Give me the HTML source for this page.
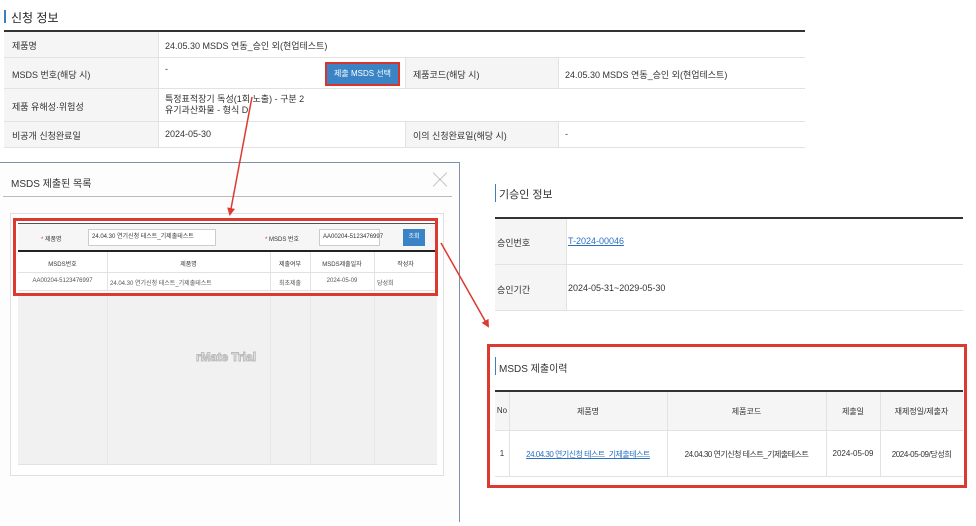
<!DOCTYPE html>
<html><head><meta charset="utf-8"><style>
*{margin:0;padding:0;box-sizing:border-box}
body{width:976px;height:526px;background:#fff;position:relative;overflow:hidden;font-family:"Liberation Sans","Noto Sans CJK KR",sans-serif;color:#333}
.a{position:absolute;white-space:nowrap}
.f9{font-size:9px}.f8{font-size:8px}.f6{font-size:6px}
.hl{position:absolute;height:1px;background:#e2e2e2}
.vl{position:absolute;width:1px;background:#e2e2e2}
.lab{position:absolute;background:#f5f5f5}
</style></head><body>

<!-- top section -->
<div class="a" style="left:4px;top:10px;width:2px;height:13px;background:#3c7fbf"></div>
<div class="a" style="left:11px;top:9px;font-size:12px;color:#222">신청 정보</div>
<div class="a" style="left:4px;top:30px;width:801px;height:2px;background:#333"></div>
<div class="lab" style="left:4px;top:32px;width:154px;height:116px"></div>
<div class="lab" style="left:405px;top:58px;width:153px;height:31px"></div>
<div class="lab" style="left:405px;top:121px;width:153px;height:27px"></div>
<div class="hl" style="left:4px;top:57px;width:801px"></div>
<div class="hl" style="left:4px;top:88px;width:801px"></div>
<div class="hl" style="left:4px;top:121px;width:801px"></div>
<div class="hl" style="left:4px;top:147px;width:801px"></div>
<div class="vl" style="left:158px;top:32px;height:116px"></div>
<div class="vl" style="left:405px;top:58px;height:31px"></div>
<div class="vl" style="left:558px;top:58px;height:31px"></div>
<div class="vl" style="left:405px;top:121px;height:27px"></div>
<div class="vl" style="left:558px;top:121px;height:27px"></div>
<div class="a f9" style="left:12px;top:39px">제품명</div>
<div class="a f9" style="left:165px;top:39px">24.05.30 MSDS 연동_승인 외(현업테스트)</div>
<div class="a f9" style="left:12px;top:68px">MSDS 번호(해당 시)</div>
<div class="a f9" style="left:165px;top:64px">-</div>
<div class="a" style="left:325px;top:62px;width:75px;height:24px;border:2px solid #d9342b;background:#3a84c6;color:#fff;font-size:8px;text-align:center;line-height:20px">제출 MSDS 선택</div>
<div class="a f9" style="left:413px;top:68px">제품코드(해당 시)</div>
<div class="a f9" style="left:565px;top:68px">24.05.30 MSDS 연동_승인 외(현업테스트)</div>
<div class="a f9" style="left:12px;top:100px">제품 유해성·위험성</div>
<div class="a f9" style="left:165px;top:94px;line-height:11px">특정표적장기 독성(1회 노출) - 구분 2<br>유기과산화물 - 형식 D</div>
<div class="a f9" style="left:12px;top:129px">비공개 신청완료일</div>
<div class="a f9" style="left:165px;top:129px">2024-05-30</div>
<div class="a f9" style="left:413px;top:129px">이의 신청완료일(해당 시)</div>
<div class="a f9" style="left:565px;top:129px">-</div>

<!-- modal -->
<div class="a" style="left:0;top:162px;width:460px;height:360px;border-top:1px solid #7d93ad;border-right:1px solid #7d93ad;background:#fdfdfd"></div>
<div class="a" style="left:11px;top:175px;font-size:10px;color:#333">MSDS 제출된 목록</div>
<div class="a" style="left:433px;top:170px;font-size:14px;color:#999;font-weight:300">╳</div>
<div class="a" style="left:3px;top:196px;width:449px;height:1px;background:#bbb"></div>
<div class="a" style="left:10px;top:213px;width:434px;height:263px;border:1px solid #e0e0e0;background:#fff"></div>
<div class="a" style="left:18px;top:296px;width:419px;height:169px;background:#f1f1f1;border-bottom:1px solid #e2e2e2"></div>
<div class="vl" style="left:107px;top:296px;height:169px;background:#e8e8e8"></div>
<div class="vl" style="left:270px;top:296px;height:169px;background:#e8e8e8"></div>
<div class="vl" style="left:310px;top:296px;height:169px;background:#e8e8e8"></div>
<div class="vl" style="left:374px;top:296px;height:169px;background:#e8e8e8"></div>
<div class="a" style="left:196px;top:350px;font-size:12px;font-weight:bold;color:#f1f1f1;-webkit-text-stroke:1px #bbb">rMate Trial</div>
<div class="a" style="left:18px;top:223px;width:419px;height:1px;background:#555"></div>
<div class="a" style="left:18px;top:224px;width:419px;height:27px;background:#f6f6f6"></div>
<div class="a f6" style="left:41px;top:234px"><span style="color:#d33">*</span> 제품명</div>
<div class="a" style="left:88px;top:229px;width:128px;height:17px;border:1px solid #ccc;background:#fff;font-size:6px;line-height:15px;padding-left:3px">24.04.30 연기신청 테스트_기제출테스트</div>
<div class="a f6" style="left:265px;top:234px"><span style="color:#d33">*</span> MSDS 번호</div>
<div class="a" style="left:319px;top:229px;width:61px;height:17px;border:1px solid #ccc;background:#fff;font-size:6px;line-height:15px;padding-left:3px">AA00204-5123476997</div>
<div class="a" style="left:403px;top:229px;width:22px;height:17px;background:#3a84c6;color:#fff;font-size:6px;line-height:17px;text-align:center">조회</div>
<div class="a" style="left:18px;top:250px;width:419px;height:2px;background:#222"></div>
<div class="hl" style="left:18px;top:272px;width:419px"></div>
<div class="hl" style="left:18px;top:290px;width:419px"></div>
<div class="vl" style="left:107px;top:252px;height:38px"></div>
<div class="vl" style="left:270px;top:252px;height:38px"></div>
<div class="vl" style="left:310px;top:252px;height:38px"></div>
<div class="vl" style="left:374px;top:252px;height:38px"></div>
<div class="a f6" style="left:18px;top:259px;width:89px;text-align:center">MSDS번호</div>
<div class="a f6" style="left:107px;top:259px;width:163px;text-align:center">제품명</div>
<div class="a f6" style="left:270px;top:259px;width:40px;text-align:center">제출여부</div>
<div class="a f6" style="left:310px;top:259px;width:64px;text-align:center">MSDS제출일자</div>
<div class="a f6" style="left:374px;top:259px;width:63px;text-align:center">작성자</div>
<div class="a f6" style="left:18px;top:278px;width:89px;text-align:center;color:#555">AA00204-5123476997</div>
<div class="a f6" style="left:110px;top:278px;color:#555">24.04.30 연기신청 테스트_기제출테스트</div>
<div class="a f6" style="left:270px;top:278px;width:40px;text-align:center;color:#555">최초제출</div>
<div class="a f6" style="left:310px;top:278px;width:64px;text-align:center;color:#555">2024-05-09</div>
<div class="a f6" style="left:377px;top:278px;color:#555">당성희</div>
<div class="a" style="left:13px;top:218px;width:425px;height:78px;border:3px solid #dc3a2f"></div>

<!-- right section -->
<div class="a" style="left:495px;top:184px;width:1px;height:18px;background:#3c7fbf"></div>
<div class="a" style="left:499px;top:186px;font-size:11px;color:#333">기승인 정보</div>
<div class="a" style="left:495px;top:217px;width:468px;height:2px;background:#333"></div>
<div class="lab" style="left:495px;top:219px;width:71px;height:92px"></div>
<div class="vl" style="left:566px;top:219px;height:92px"></div>
<div class="hl" style="left:495px;top:264px;width:468px"></div>
<div class="hl" style="left:495px;top:310px;width:468px"></div>
<div class="a f9" style="left:497px;top:236px">승인번호</div>
<div class="a f9" style="left:568px;top:236px;color:#2a6fc0;text-decoration:underline">T-2024-00046</div>
<div class="a f9" style="left:497px;top:283px">승인기간</div>
<div class="a f9" style="left:568px;top:283px">2024-05-31~2029-05-30</div>

<div class="a" style="left:495px;top:357px;width:1px;height:18px;background:#3c7fbf"></div>
<div class="a" style="left:499px;top:360px;font-size:10px;color:#333">MSDS 제출이력</div>
<div class="a" style="left:495px;top:390px;width:468px;height:2px;background:#333"></div>
<div class="a" style="left:495px;top:392px;width:468px;height:38px;background:#f5f5f5"></div>
<div class="hl" style="left:495px;top:430px;width:468px"></div>
<div class="hl" style="left:495px;top:476px;width:468px"></div>
<div class="vl" style="left:509px;top:392px;height:84px"></div>
<div class="vl" style="left:667px;top:392px;height:84px"></div>
<div class="vl" style="left:826px;top:392px;height:84px"></div>
<div class="vl" style="left:880px;top:392px;height:84px"></div>
<div class="a f8" style="left:495px;top:406px;width:14px;text-align:center">No</div>
<div class="a f8" style="left:509px;top:406px;width:158px;text-align:center">제품명</div>
<div class="a f8" style="left:667px;top:406px;width:159px;text-align:center">제품코드</div>
<div class="a f8" style="left:826px;top:406px;width:54px;text-align:center">제출일</div>
<div class="a f8" style="left:880px;top:406px;width:83px;text-align:center">재제정일/제출자</div>
<div class="a f8" style="left:495px;top:449px;width:14px;text-align:center">1</div>
<div class="a f8" style="left:509px;top:449px;width:158px;text-align:center;color:#2a6fc0;text-decoration:underline;letter-spacing:-0.5px">24.04.30 연기신청 테스트_기제출테스트</div>
<div class="a f8" style="left:667px;top:449px;width:159px;text-align:center;letter-spacing:-0.5px">24.04.30 연기신청 테스트_기제출테스트</div>
<div class="a f8" style="left:826px;top:449px;width:54px;text-align:center">2024-05-09</div>
<div class="a f8" style="left:880px;top:449px;width:83px;text-align:center;letter-spacing:-0.4px">2024-05-09/당성희</div>
<div class="a" style="left:487px;top:344px;width:480px;height:144px;border:3px solid #dc3a2f"></div>

<!-- arrows -->
<svg class="a" style="left:0;top:0" width="976" height="526">
<defs><marker id="m" markerWidth="8" markerHeight="8" refX="6" refY="4" orient="auto" markerUnits="userSpaceOnUse"><path d="M0,0 L8,4 L0,8 Z" fill="#dc3a2f"/></marker></defs>
<line x1="252" y1="97" x2="230" y2="214" stroke="#dc3a2f" stroke-width="1.5" marker-end="url(#m)" transform="rotate(0)"/>
<line x1="441" y1="243" x2="488" y2="326" stroke="#dc3a2f" stroke-width="1.5" marker-end="url(#m)"/>
</svg>
</body></html>
